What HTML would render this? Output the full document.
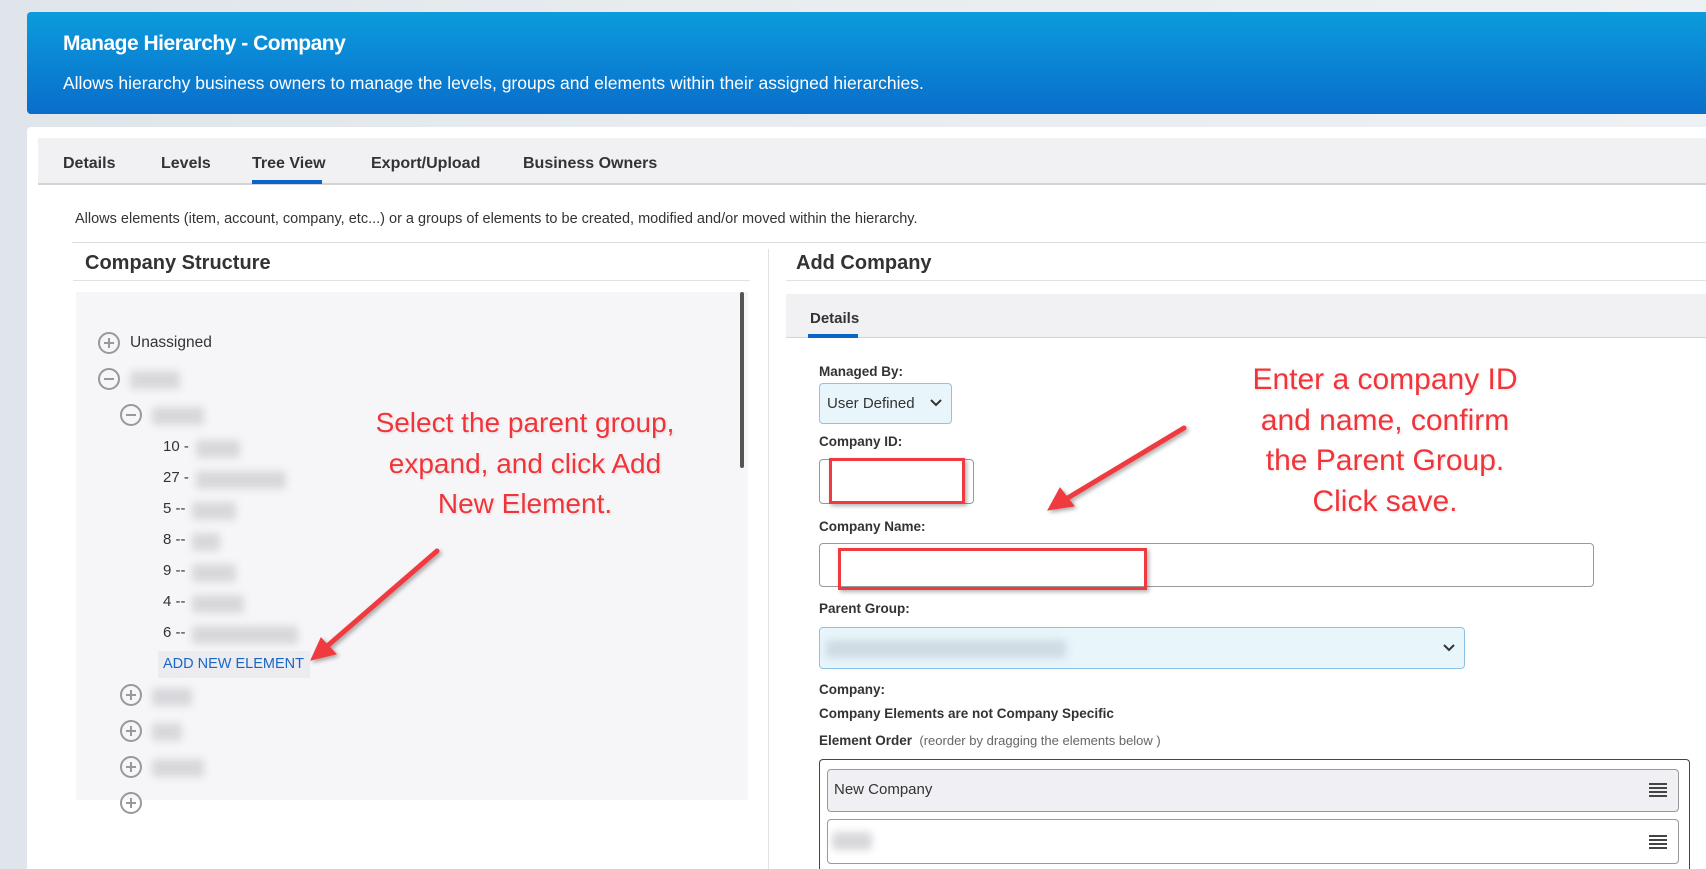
<!DOCTYPE html>
<html style="width:1706px;height:869px;overflow:hidden"><head><meta charset="utf-8"><style>
*{margin:0;padding:0;box-sizing:border-box}
html,body{width:1706px;height:869px;overflow:hidden}
body{background:linear-gradient(90deg,#dfe5ea,#e8ecef 40%,#eef1f3);font-family:"Liberation Sans",sans-serif;color:#333;position:relative}
.a{position:absolute}
.hdr{left:27px;top:12px;width:1679px;height:102px;border-radius:4px 0 0 4px;background:linear-gradient(180deg,#0b9cdc,#0a6dcb);color:#fff}
.hdr h1{position:absolute;left:36px;top:20px;font-size:21px;font-weight:bold;letter-spacing:-0.5px}
.hdr p{position:absolute;left:36px;top:61px;font-size:17.5px}
.panel{left:27px;top:127px;width:1679px;height:742px;background:#fff;border-radius:4px 0 0 0}
.tabs{left:38px;top:138px;width:1668px;height:47px;background:#f1f1f4;border-bottom:2px solid #d4d4d8}
.tab{position:absolute;top:17px;font-size:16px;font-weight:bold;color:#333}
.lbl{font-size:13.5px;font-weight:bold;color:#333;position:absolute}
.ic{position:absolute;width:22px;height:22px;border:2px solid #999;border-radius:50%}
.ic:before{content:"";position:absolute;left:4px;top:8px;width:10px;height:2px;background:#999}
.ic.p:after{content:"";position:absolute;left:8px;top:4px;width:2px;height:10px;background:#999}
.bl{position:absolute;height:18px;background:#d8d8dc;filter:blur(4px);border-radius:3px}
.num{position:absolute;font-size:15px;color:#333;left:163px}
.ann{position:absolute;color:#f0353a;font-size:28px;text-align:center;line-height:40.5px;text-shadow:0 0 2px #fff,1px 1px 2px rgba(0,0,0,.15)}
.inp{position:absolute;border:1px solid #999;border-radius:4px;background:#fff}
.red{position:absolute;border:3px solid #ef3b40;box-shadow:2px 2px 4px rgba(0,0,0,.3)}
</style></head><body>
<div class="a hdr"><h1>Manage Hierarchy - Company</h1><p>Allows hierarchy business owners to manage the levels, groups and elements within their assigned hierarchies.</p></div>
<div class="a panel"></div>
<div class="a tabs">
<span class="tab" style="left:25px">Details</span>
<span class="tab" style="left:123px">Levels</span>
<span class="tab" style="left:214px">Tree View</span>
<span class="tab" style="left:333px">Export/Upload</span>
<span class="tab" style="left:485px">Business Owners</span>
<div class="a" style="left:214px;top:42px;width:70px;height:4px;background:#0b64c8"></div>
</div>
<div class="a" style="left:75px;top:211px;font-size:14.5px;color:#333">Allows elements (item, account, company, etc...) or a groups of elements to be created, modified and/or moved within the hierarchy.</div>
<div class="a" style="left:72px;top:242px;width:1634px;height:1px;background:#ddd"></div>
<div class="a" style="left:85px;top:252px;font-size:20px;font-weight:bold;color:#333">Company Structure</div>
<div class="a" style="left:73px;top:280px;width:677px;height:1px;background:#e2e2e2"></div>
<div class="a" style="left:768px;top:249px;width:1px;height:620px;background:#e2e2e2"></div>
<div class="a" style="left:76px;top:292px;width:672px;height:508px;background:#f6f6f8"></div>
<div class="a" style="left:740px;top:292px;width:4px;height:176px;background:#555;border-radius:2px"></div>
<div class="ic p" style="left:98px;top:332px"></div><div class="a" style="left:130px;top:334px;font-size:15.5px;color:#333">Unassigned</div>
<div class="ic" style="left:98px;top:368px"></div><div class="bl" style="left:130px;top:371px;width:50px"></div>
<div class="ic" style="left:120px;top:404px"></div><div class="bl" style="left:152px;top:407px;width:52px"></div>
<div class="num" style="top:438px">10 -</div><div class="bl" style="left:196px;top:440px;width:44px"></div>
<div class="num" style="top:469px">27 -</div><div class="bl" style="left:196px;top:471px;width:90px"></div>
<div class="num" style="top:500px">5 --</div><div class="bl" style="left:192px;top:502px;width:44px"></div>
<div class="num" style="top:531px">8 --</div><div class="bl" style="left:192px;top:533px;width:28px"></div>
<div class="num" style="top:562px">9 --</div><div class="bl" style="left:192px;top:564px;width:44px"></div>
<div class="num" style="top:593px">4 --</div><div class="bl" style="left:192px;top:595px;width:52px"></div>
<div class="num" style="top:624px">6 --</div><div class="bl" style="left:192px;top:626px;width:106px"></div>
<div class="a" style="left:158px;top:651px;width:152px;height:27px;background:#ececf0"></div>
<div class="a" style="left:163px;top:656px;font-size:14.5px;color:#1a66c6;font-weight:500">ADD NEW ELEMENT</div>
<div class="ic p" style="left:120px;top:684px"></div><div class="bl" style="left:152px;top:688px;width:40px"></div>
<div class="ic p" style="left:120px;top:720px"></div><div class="bl" style="left:152px;top:723px;width:30px"></div>
<div class="ic p" style="left:120px;top:756px"></div><div class="bl" style="left:152px;top:759px;width:52px"></div>
<div class="ic p" style="left:120px;top:792px"></div>
<div class="ann" style="left:325px;top:403px;width:400px">Select the parent group,<br>expand, and click Add<br>New Element.</div>

<div class="a" style="left:796px;top:252px;font-size:20px;font-weight:bold;color:#333">Add Company</div>
<div class="a" style="left:786px;top:280px;width:920px;height:1px;background:#e2e2e2"></div>
<div class="a" style="left:786px;top:294px;width:920px;height:44px;background:#f1f1f4;border-bottom:1px solid #d4d4d8"></div>
<div class="a" style="left:810px;top:310px;font-size:15px;font-weight:bold">Details</div>
<div class="a" style="left:808px;top:334px;width:50px;height:4px;background:#0b64c8"></div>
<div class="lbl" style="left:819px;top:364px">Managed By:</div>
<div class="inp" style="left:819px;top:383px;width:133px;height:41px;background:#e8f5fb;border-color:#8cc3e8"></div>
<div class="a" style="left:827px;top:395px;font-size:15px">User Defined</div>
<svg class="a" style="left:929px;top:398px" width="14" height="10"><path d="M2 2l5 5 5-5" stroke="#333" stroke-width="2" fill="none"/></svg>
<div class="lbl" style="left:819px;top:434px">Company ID:</div>
<div class="inp" style="left:819px;top:459px;width:155px;height:45px"></div>
<div class="red" style="left:829px;top:458px;width:136px;height:46px"></div>
<div class="lbl" style="left:819px;top:519px">Company Name:</div>
<div class="inp" style="left:819px;top:543px;width:775px;height:44px"></div>
<div class="red" style="left:838px;top:548px;width:309px;height:42px"></div>
<div class="lbl" style="left:819px;top:601px">Parent Group:</div>
<div class="inp" style="left:819px;top:627px;width:646px;height:42px;background:#e8f5fb;border-color:#8cc3e8"></div>
<div class="bl" style="left:826px;top:640px;width:240px;background:#cfdbe2"></div>
<svg class="a" style="left:1442px;top:643px" width="14" height="10"><path d="M2 2l5 5 5-5" stroke="#333" stroke-width="2" fill="none"/></svg>
<div class="lbl" style="left:819px;top:682px">Company:</div>
<div class="lbl" style="left:819px;top:706px">Company Elements are not Company Specific</div>
<div class="lbl" style="left:819px;top:733px">Element Order <span style="font-weight:normal;color:#666;font-size:13px">&nbsp;(reorder by dragging the elements below )</span></div>
<div class="a" style="left:819px;top:759px;width:871px;height:110px;border:1px solid #444;border-bottom:none;border-radius:4px 4px 0 0"></div>
<div class="a" style="left:827px;top:769px;width:852px;height:43px;border:1px solid #999;border-radius:4px;background:#efeff4"></div>
<div class="a" style="left:834px;top:781px;font-size:15px">New Company</div>
<div class="a" style="left:827px;top:819px;width:852px;height:45px;border:1px solid #999;border-radius:4px;background:#fff"></div>
<div class="bl" style="left:832px;top:832px;width:40px"></div>
<svg class="a" style="left:1648px;top:782px" width="20" height="16"><path d="M1 2h18M1 6h18M1 10h18M1 14h18" stroke="#444" stroke-width="2"/></svg>
<svg class="a" style="left:1648px;top:834px" width="20" height="16"><path d="M1 2h18M1 6h18M1 10h18M1 14h18" stroke="#444" stroke-width="2"/></svg>
<div class="ann" style="left:1180px;top:360px;width:410px;font-size:30px;line-height:40.5px">Enter a company ID<br>and name, confirm<br>the Parent Group.<br>Click save.</div>
<svg class="a" style="left:0;top:0" width="1706" height="869">
<defs><filter id="s"><feDropShadow dx="2" dy="2" stdDeviation="2" flood-opacity=".35"/></filter></defs>
<g filter="url(#s)" stroke="#ef3b40" fill="#ef3b40">
<line x1="1184" y1="428" x2="1066" y2="499" stroke-width="5" stroke-linecap="round"/>
<path d="M1048 510l12-22 14 18z"/>
<line x1="437" y1="551" x2="325" y2="648" stroke-width="5" stroke-linecap="round"/>
<path d="M311 660l10-22 15 16z"/>
</g></svg>
</body></html>
